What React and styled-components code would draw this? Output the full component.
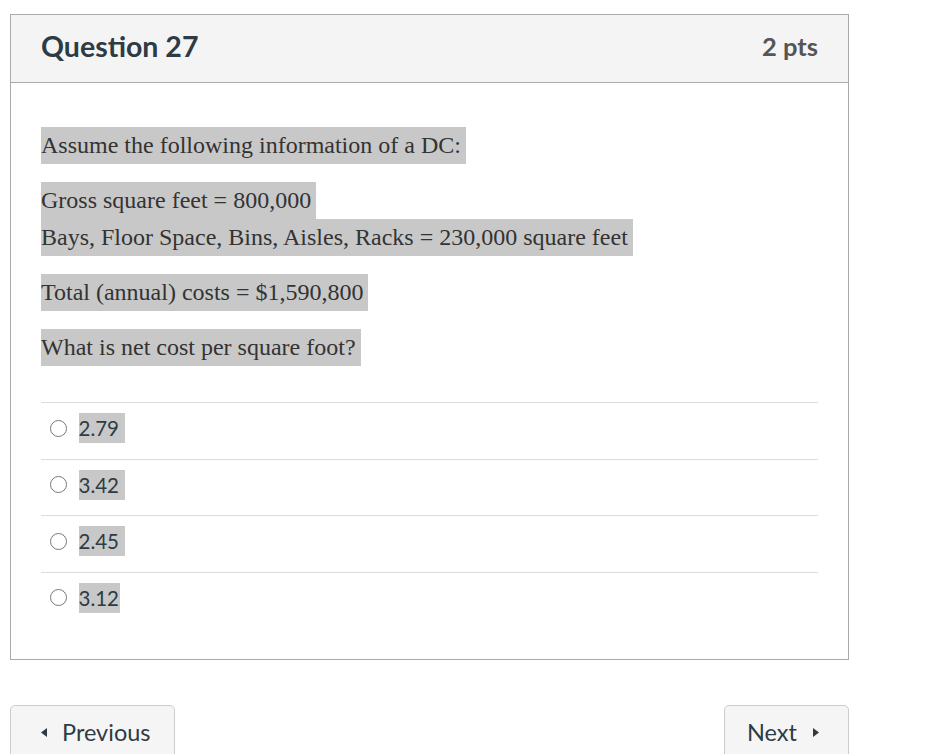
import styled, { createGlobalStyle } from "styled-components";

const GlobalStyle = createGlobalStyle`
  body {
    margin: 0;
    background: #fff;
    font-family: Lato, "Open Sans", sans-serif;
    color: #2d3b45;
  }
`;

const Page = styled.div`
  padding: 14px 0 0 10px;
  width: 839px;
`;

const Card = styled.div`
  border: 1px solid #aaaaaa;
  background: #fff;
`;

const Header = styled.div`
  height: 68px;
  box-sizing: border-box;
  display: flex;
  align-items: center;
  justify-content: space-between;
  padding: 0 30px 6px;
  background: #f4f4f4;
  border-bottom: 1px solid #aaaaaa;
`;

const Title = styled.h2`
  margin: 0;
  font-size: 28.5px;
  font-weight: 700;
  color: #2d3b45;
`;

const Points = styled.span`
  font-size: 25.5px;
  font-weight: 700;
  color: #555555;
`;

const Body = styled.div`
  padding: 44px 30px 31px;
`;

const Text = styled.div`
  display: flex;
  flex-direction: column;
  gap: 18px;
  font-family: "Liberation Serif", "Times New Roman", serif;
  font-size: 24px;
  line-height: 37px;
  color: #333;
  margin-bottom: 36px;
`;

const Para = styled.div`
  display: flex;
  flex-direction: column;
`;

const Line = styled.span`
  width: fit-content;
  padding-right: 5px;
  background: #c8c8c8;
`;

const Answers = styled.div`
  display: flex;
  flex-direction: column;
`;

const Answer = styled.label`
  display: flex;
  align-items: center;
  gap: 12px;
  padding: 10px 0 15.6px 8.5px;
  border-top: 1px solid #dcdcdc;
`;

const Radio = styled.span`
  width: 17px;
  height: 17px;
  box-sizing: border-box;
  border-radius: 50%;
  border: 1.5px solid #777777;
  background: #fff;
  flex-shrink: 0;
`;

const AnswerText = styled.span`
  font-size: 20.5px;
  line-height: 30px;
  background: #c8c8c8;
  padding-right: ${(p) => (p.$pad ? 6 : 1)}px;
  color: #2d3b45;
`;

const Nav = styled.div`
  display: flex;
  justify-content: space-between;
  margin-top: 45px;
`;

const NavButton = styled.button`
  height: 57px;
  display: flex;
  align-items: center;
  gap: ${(p) => (p.$next ? 16 : 15)}px;
  padding: ${(p) => (p.$next ? "0 29px 3px 22px" : "0 24px 3px 30px")};
  background: #f5f5f5;
  border: 1px solid #c7cdd1;
  border-radius: 5px;
  font-family: Lato, sans-serif;
  font-size: 23.5px;
  color: #2d3b45;
`;

const Arrow = ({ dir }) => (
  <svg width="6" height="9" viewBox="0 0 6 9">
    {dir === "left" ? (
      <path d="M6 0 L0 4.5 L6 9 Z" fill="#2d3b45" />
    ) : (
      <path d="M0 0 L6 4.5 L0 9 Z" fill="#2d3b45" />
    )}
  </svg>
);

const answers = [
  { v: "2.79", pad: true },
  { v: "3.42", pad: true },
  { v: "2.45", pad: true },
  { v: "3.12", pad: false },
];

export default function App() {
  return (
    <Page>
      <GlobalStyle />
      <Card>
        <Header>
          <Title>Question 27</Title>
          <Points>2 pts</Points>
        </Header>
        <Body>
          <Text>
            <Line>Assume the following information of a DC:</Line>
            <Para>
              <Line>Gross square feet = 800,000</Line>
              <Line>Bays, Floor Space, Bins, Aisles, Racks = 230,000 square feet</Line>
            </Para>
            <Line>Total (annual) costs = $1,590,800</Line>
            <Line>What is net cost per square foot?</Line>
          </Text>
          <Answers>
            {answers.map((a) => (
              <Answer key={a.v}>
                <Radio />
                <AnswerText $pad={a.pad}>{a.v}</AnswerText>
              </Answer>
            ))}
          </Answers>
        </Body>
      </Card>
      <Nav>
        <NavButton>
          <Arrow dir="left" />
          Previous
        </NavButton>
        <NavButton $next>
          Next
          <Arrow dir="right" />
        </NavButton>
      </Nav>
    </Page>
  );
}
